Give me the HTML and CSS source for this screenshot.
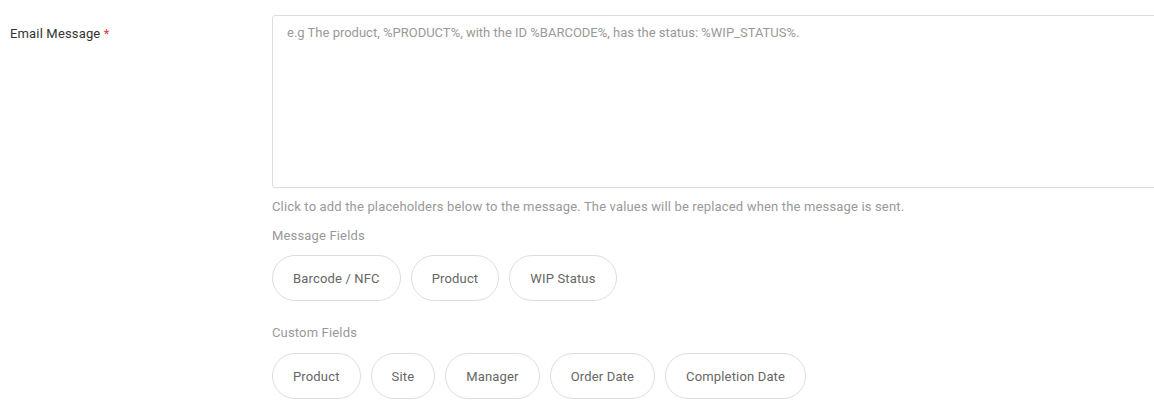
FILE: index.html
```html
<!DOCTYPE html>
<html>
<head>
<meta charset="utf-8">
<link rel="stylesheet" href="styles.css">
</head>
<body>
<div class="page">
  <div class="form-row">
    <div class="label-col">
      <label class="label">Email Message <span class="req">*</span></label>
    </div>
    <div class="field-col">
      <textarea class="message" placeholder="e.g The product, %PRODUCT%, with the ID %BARCODE%, has the status: %WIP_STATUS%."></textarea>
      <p class="help">Click to add the placeholders below to the message. The values will be replaced when the message is sent.</p>
      <p class="group-title">Message Fields</p>
      <div class="chips">
        <button class="chip">Barcode / NFC</button>
        <button class="chip">Product</button>
        <button class="chip">WIP Status</button>
      </div>
      <p class="group-title custom">Custom Fields</p>
      <div class="chips second">
        <button class="chip">Product</button>
        <button class="chip">Site</button>
        <button class="chip">Manager</button>
        <button class="chip">Order Date</button>
        <button class="chip">Completion Date</button>
      </div>
    </div>
  </div>
</div>
</body>
</html>
```

FILE: styles.css
```css
html, body {
  margin: 0;
  padding: 0;
  background: #fff;
  overflow: hidden;
}
body {
  font-family: Roboto, "Liberation Sans", sans-serif;
  font-size: 13px;
  line-height: 18px;
  letter-spacing: 0.16px;
}
.page {
  width: 1154px;
  overflow: hidden;
}
.form-row {
  display: flex;
  padding-top: 15px;
}
.label-col {
  flex: 0 0 262px;
  padding-left: 10px;
  padding-top: 10px;
}
.label {
  color: #333;
  font-size: 13px;
}
.req {
  color: #e53935;
}
.field-col {
  flex: 0 0 920px;
  display: flex;
  flex-direction: column;
}
.message {
  box-sizing: border-box;
  width: 100%;
  height: 173px;
  border: 1px solid #ddd;
  border-radius: 3px;
  padding: 8px 14px;
  font-family: Roboto, "Liberation Sans", sans-serif;
  font-size: 13px;
  line-height: 18px;
  letter-spacing: 0;
  resize: none;
  outline: none;
  margin: 0;
  display: block;
}
.message::placeholder {
  color: #999;
}
.help {
  margin: 10px 0 0;
  color: #999;
}
.group-title {
  margin: 11px 0 0;
  color: #999;
}
.group-title.custom {
  margin-top: 23px;
}
.chips {
  display: flex;
  gap: 10px;
  margin-top: 10px;
}
.chips.second {
  margin-top: 11px;
}
.chip {
  box-sizing: border-box;
  height: 46px;
  padding: 0 20px;
  border: 1px solid #ddd;
  border-radius: 23px;
  background: #fff;
  color: #666;
  font-family: Roboto, "Liberation Sans", sans-serif;
  font-size: 13px;
  letter-spacing: 0.16px;
  cursor: pointer;
}
```
